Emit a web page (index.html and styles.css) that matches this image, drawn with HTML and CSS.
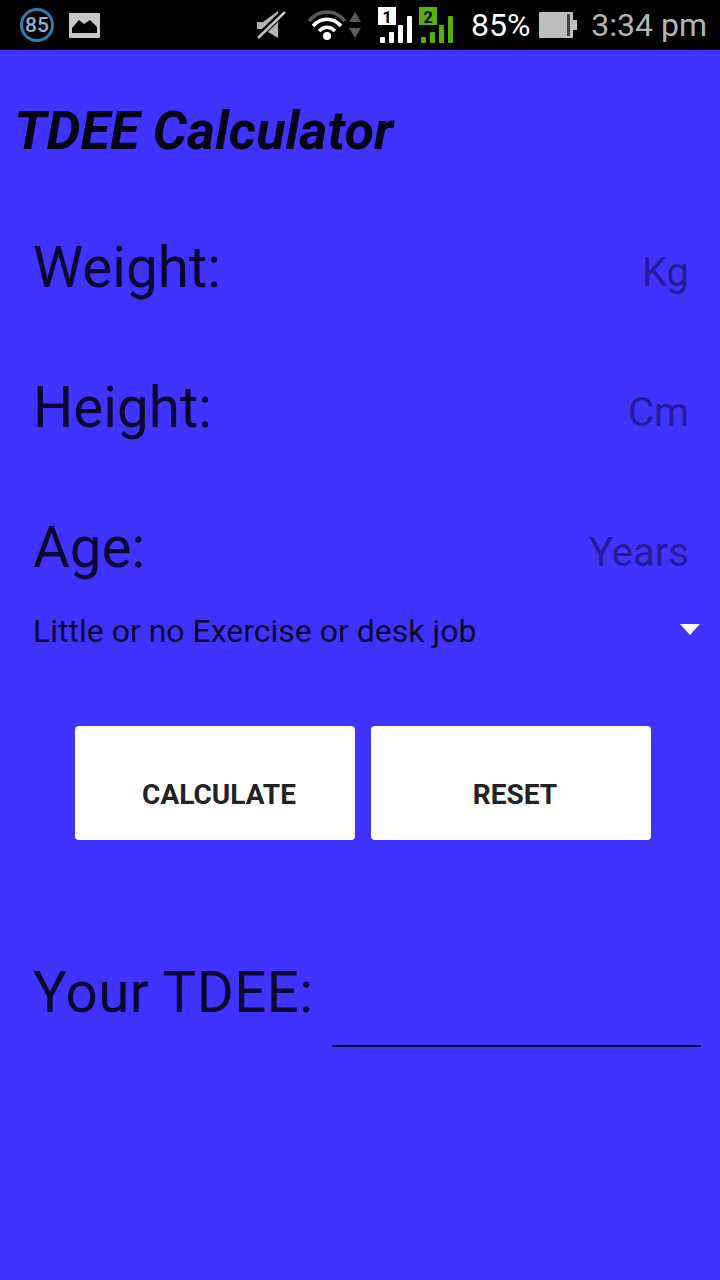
FILE: index.html
```html
<!DOCTYPE html>
<html lang="en">
<head>
    <meta charset="UTF-8">
    <meta name="viewport" content="width=device-width, initial-scale=1.0">
    <title>TDEE Calculator</title>
    <link rel="stylesheet" href="styles.css">
</head>
<body>
    <div class="status-bar">
        <div class="status-left">
            <div class="ring">
                <svg width="36" height="36" viewBox="0 0 36 36">
                    <circle cx="18" cy="18" r="15.5" fill="none" stroke="#2f7fb5" stroke-width="3"/>
                </svg>
                <span class="ring-num">85</span>
            </div>
            <svg class="pic" width="31" height="25" viewBox="0 0 31 25">
                <rect width="31" height="25" rx="1" fill="#c8c8c8"/>
                <path d="M3 20V15L10 7L15 11L21 7L28 14V20Z" fill="#000"/>
            </svg>
        </div>
        <div class="status-right">
            <svg class="mute" width="32" height="32" viewBox="0 0 32 32">
                <path d="M1 13H7L22 2V29L7 20H1Z" fill="#b4b4b4"/>
                <path d="M28 3L1 29" stroke="#000" stroke-width="6"/>
                <path d="M29 3L2 29" stroke="#c4c4c4" stroke-width="2.5"/>
            </svg>
            <svg class="wifi" width="40" height="32" viewBox="0 0 40 32">
                <path d="M2 12C12 0 28 0 38 12" fill="none" stroke="#5a5a5a" stroke-width="3.5"/>
                <path d="M6 17C14 8 26 8 34 17" fill="none" stroke="#fff" stroke-width="3.5"/>
                <path d="M12 22C17 17 23 17 28 22" fill="none" stroke="#fff" stroke-width="3.5"/>
                <circle cx="20" cy="27" r="4" fill="#fff"/>
            </svg>
            <svg class="arrows" width="12" height="26" viewBox="0 0 12 26">
                <path d="M6 0L12 10H0Z" fill="#5a5a5a"/>
                <path d="M6 26L12 16H0Z" fill="#5a5a5a"/>
            </svg>
            <svg class="signal" width="36" height="36" viewBox="0 0 36 36">
                <rect x="1" y="0" width="18" height="18" fill="#fff"/>
                <text x="10" y="15.500" class="sim-num" text-anchor="middle">1</text>
                <rect x="3" y="30" width="5" height="6" rx="1" fill="#fff"/>
                <rect x="12" y="25" width="5" height="11" rx="1" fill="#fff"/>
                <rect x="21" y="18" width="5" height="18" rx="1" fill="#fff"/>
                <rect x="30" y="9" width="5" height="27" rx="1" fill="#fff"/>
            </svg>
            <svg class="signal" width="36" height="36" viewBox="0 0 36 36">
                <rect x="1" y="0" width="18" height="18" fill="#56b00c"/>
                <text x="10" y="15.500" class="sim-num" text-anchor="middle">2</text>
                <rect x="3" y="30" width="5" height="6" rx="1" fill="#56b00c"/>
                <rect x="12" y="25" width="5" height="11" rx="1" fill="#56b00c"/>
                <rect x="21" y="18" width="5" height="18" rx="1" fill="#56b00c"/>
                <rect x="30" y="9" width="5" height="27" rx="1" fill="#56b00c"/>
            </svg>
            <span class="percent">85%</span>
            <svg class="battery" width="38" height="26" viewBox="0 0 38 26">
                <rect width="34" height="26" rx="1" fill="#bdbdbd"/>
                <rect x="28" y="2" width="3" height="22" fill="#444"/>
                <rect x="34" y="8" width="4" height="10" fill="#bdbdbd"/>
            </svg>
            <span class="clock">3:34 pm</span>
        </div>
    </div>

    <div class="app">
        <h1 class="title">TDEE Calculator</h1>

        <div class="row">
            <span class="label">Weight:</span>
            <span class="hint">Kg</span>
        </div>
        <div class="row">
            <span class="label">Height:</span>
            <span class="hint">Cm</span>
        </div>
        <div class="row">
            <span class="label">Age:</span>
            <span class="hint">Years</span>
        </div>

        <div class="spinner">
            <span>Little or no Exercise or desk job</span>
            <span class="caret"></span>
        </div>

        <div class="buttons">
            <button class="btn" type="button">CALCULATE</button>
            <button class="btn" type="button">RESET</button>
        </div>

        <div class="result">
            <span class="label">Your TDEE:</span>
            <div class="result-line"></div>
        </div>
    </div>
</body>
</html>
```

FILE: styles.css
```css
* {
    margin: 0;
    padding: 0;
    box-sizing: border-box;
}

body {
    width: 720px;
    height: 1280px;
    overflow: hidden;
    font-family: Roboto, sans-serif;
    background-color: #4033ff;
}

.status-bar {
    height: 50px;
    background: #000;
    display: flex;
    justify-content: space-between;
    align-items: center;
    padding: 0 13px 0 19px;
}

.status-left, .status-right {
    display: flex;
    align-items: center;
}

.ring {
    position: relative;
    width: 36px;
    height: 36px;
}

.ring-num {
    position: absolute;
    top: 0;
    left: 0;
    width: 36px;
    line-height: 36px;
    text-align: center;
    font-size: 21px;
    font-weight: 500;
    color: #8db4cf;
}

.pic {
    margin-left: 14px;
}

.mute {
    margin-right: 19px;
}

.arrows {
    margin: 0 16px 0 2px;
}

.signal {
    margin-right: 5px;
}

.sim-num {
    font: bold 16px Roboto, sans-serif;
    fill: #000;
}

.percent {
    color: #fff;
    font-size: 32px;
    margin: 0 9px 0 12px;
}

.clock {
    color: #b4b4b4;
    font-size: 32px;
    margin-left: 14px;
}

.title {
    font-size: 54px;
    font-weight: bold;
    font-style: italic;
    color: #050414;
    line-height: 60px;
    padding: 51px 0 0 14px;
}

.row {
    height: 140px;
    display: flex;
    justify-content: space-between;
    padding: 0 31px 0 33px;
}

.title + .row {
    margin-top: 75px;
}

.label {
    font-size: 56.5px;
    line-height: 64px;
    color: #0a0830;
}

.hint {
    font-size: 40px;
    line-height: 44px;
    margin-top: 15px;
    color: #241c96;
}

.spinner {
    display: flex;
    justify-content: space-between;
    align-items: center;
    height: 40px;
    margin-top: -45px;
    padding: 0 20px 0 33px;
    font-size: 32px;
    color: #0a0830;
}

.caret {
    width: 0;
    height: 0;
    border-left: 10px solid transparent;
    border-right: 10px solid transparent;
    border-top: 11px solid #fff;
    margin-top: -4px;
}

.buttons {
    display: flex;
    gap: 16px;
    padding-left: 75px;
    margin-top: 75px;
}

.btn {
    width: 280px;
    height: 114px;
    padding: 22px 0 0 8px;
    background: #fff;
    border: none;
    border-radius: 4px;
    font-family: Roboto, sans-serif;
    font-size: 28px;
    font-weight: bold;
    color: #222;
}

.result {
    display: flex;
    margin-top: 121px;
    padding-left: 33px;
}

.result .label {
    letter-spacing: .4px;
}

.result-line {
    width: 369px;
    height: 2px;
    background: #0a0830;
    margin: 84px 0 0 19px;
}
```
